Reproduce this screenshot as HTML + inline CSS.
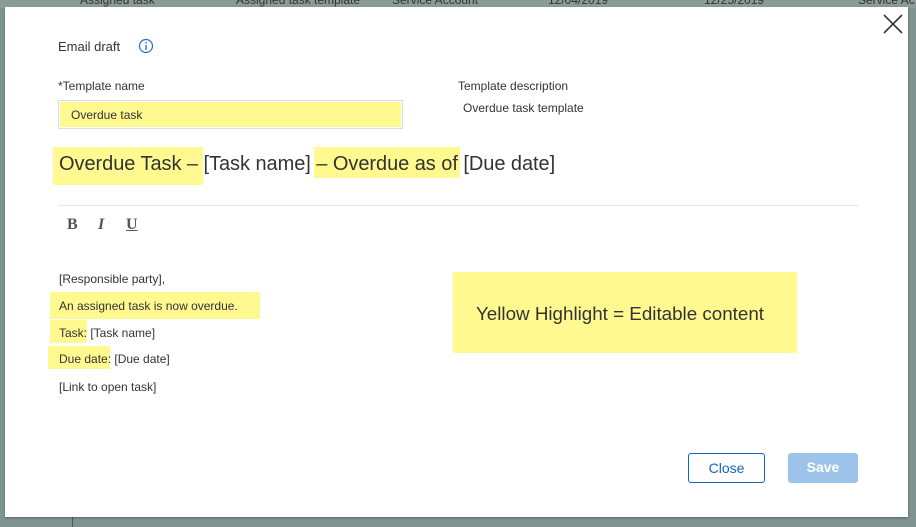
<!DOCTYPE html>
<html><head><style>
body{margin:0;width:916px;height:527px;background:#7f9390;position:relative;overflow:hidden;font-family:"Liberation Sans",sans-serif;color:#333}
.a{position:absolute;white-space:nowrap}
.y{background:#fff98f;position:absolute}
.top{position:absolute;top:0;left:0;width:916px;height:8px;background:#8a9b98;overflow:hidden;font-size:12px;color:#333}
.modal{position:absolute;left:5px;top:7px;width:903px;height:510px;background:#fff;box-shadow:0 1px 2px rgba(0,0,0,.3)}
.s{font-size:12px}
</style></head><body>
<div class="top">
<span class="a" style="left:80px;top:-7px">Assigned task</span>
<span class="a" style="left:236px;top:-7px">Assigned task template</span>
<span class="a" style="left:392px;top:-7px">Service Account</span>
<span class="a" style="left:548px;top:-7px">12/04/2019</span>
<span class="a" style="left:704px;top:-7px">12/25/2019</span>
<span class="a" style="left:858px;top:-7px">Service Ac</span>
</div>
<div style="position:absolute;left:72px;top:517px;width:1px;height:10px;background:#556"></div>
<div class="modal"></div>
<svg class="a" style="left:882px;top:13px" width="22" height="22"><path d="M2 2L20 20M20 2L2 20" stroke="#333" stroke-width="1.6"/></svg>
<div class="a" style="left:58px;top:39px;font-size:13px">Email draft</div>
<svg class="a" style="left:138px;top:38px" width="16" height="16"><circle cx="8" cy="8" r="6.5" fill="none" stroke="#2a6fd6" stroke-width="1.2"/><rect x="7.4" y="7" width="1.4" height="5" fill="#2a6fd6"/><rect x="7.4" y="4" width="1.4" height="1.5" fill="#2a6fd6"/></svg>
<div class="a s" style="left:58px;top:79px">*Template name</div>
<div class="a" style="left:58px;top:100px;width:345px;height:29px;border:1px solid #ddd;box-sizing:border-box;padding:1px"><div style="background:#fff98f;height:100%"></div></div>
<div class="a s" style="left:71px;top:108px">Overdue task</div>
<div class="a s" style="left:458px;top:79px">Template description</div>
<div class="a s" style="left:463px;top:101px">Overdue task template</div>
<div class="y" style="left:53px;top:147px;width:150px;height:38px"></div>
<div class="y" style="left:314px;top:147px;width:146px;height:31px"></div>
<div class="a" style="left:59px;top:153px;font-size:20px;letter-spacing:-0.05px">Overdue Task – [Task name] – Overdue as of [Due date]</div>
<div class="a" style="left:58px;top:205px;width:800px;height:1px;background:#e6e6e6"></div>
<div class="a" style="left:67px;top:216px;font-family:'Liberation Serif',serif;font-size:16px;color:#555;font-weight:bold">B</div>
<div class="a" style="left:98px;top:216px;font-family:'Liberation Serif',serif;font-size:16px;color:#555;font-style:italic;font-weight:bold">I</div>
<div class="a" style="left:126px;top:216px;font-family:'Liberation Serif',serif;font-size:16px;color:#555;font-weight:bold;text-decoration:underline">U</div>
<div class="y" style="left:50px;top:292px;width:210px;height:27px"></div>
<div class="y" style="left:50px;top:320px;width:37px;height:23px"></div>
<div class="y" style="left:48px;top:346px;width:62px;height:23px"></div>
<div class="a s" style="left:59px;top:272px">[Responsible party],</div>
<div class="a s" style="left:59px;top:299px">An assigned task is now overdue.</div>
<div class="a s" style="left:59px;top:326px">Task: [Task name]</div>
<div class="a s" style="left:59px;top:352px">Due date: [Due date]</div>
<div class="a s" style="left:59px;top:380px">[Link to open task]</div>
<div class="y" style="left:453px;top:272px;width:344px;height:81px"></div>
<div class="a" style="left:476px;top:303px;font-size:18.8px">Yellow Highlight = Editable content</div>
<div class="a" style="left:688px;top:453px;width:77px;height:30px;border:1px solid #1565c0;border-radius:3px;box-sizing:border-box;color:#1565c0;font-size:14px;text-align:center;line-height:28px">Close</div>
<div class="a" style="left:788px;top:453px;width:70px;height:30px;background:#9dc3ea;border-radius:3px;color:#fff;font-size:14px;font-weight:bold;text-align:center;line-height:28px">Save</div>
</body></html>
